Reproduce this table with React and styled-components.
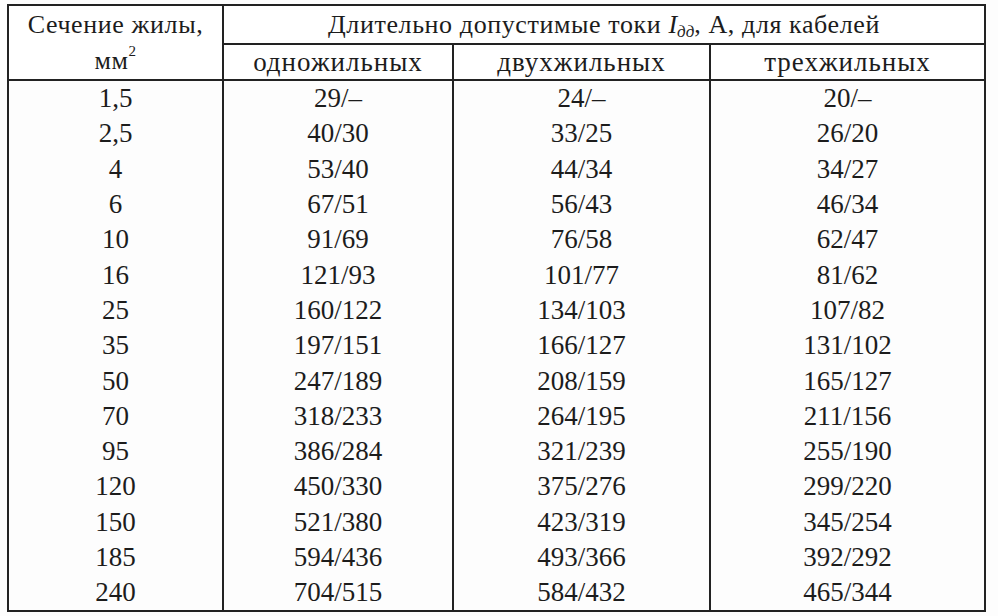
import React from 'react';
import styled, { createGlobalStyle } from 'styled-components';

const GlobalStyle = createGlobalStyle`
  html, body {
    margin: 0;
    padding: 0;
    background: #fdfdfd;
  }
  body {
    font-family: "Liberation Serif", "Times New Roman", serif;
    color: #1c1c1c;
  }
`;

const Page = styled.div`
  width: 998px;
  height: 616px;
  padding: 4px 0 0 7px;
  box-sizing: border-box;
  overflow: hidden;
`;

const Table = styled.table`
  border-collapse: collapse;
  table-layout: fixed;
  width: 977px;
  border: 2px solid #222;
`;

const HeadCell = styled.th`
  border: 2px solid #222;
  font-weight: normal;
  font-size: ${(p) => (p.$sub ? '27px' : '26px')};
  letter-spacing: ${(p) => (p.$sub ? '1px' : '0.6px')};
  line-height: 1;
  padding: 0;
  height: ${(p) => (p.$sub ? '34px' : '37px')};
  text-align: center;
  vertical-align: middle;
  background: #fff;
`;

const SectionHead = styled(HeadCell)`
  vertical-align: top;
  line-height: 36px;
  padding-top: 1px;
`;

const Sup = styled.sup`
  font-size: 15px;
  vertical-align: 13px;
  line-height: 0;
`;

const Current = styled.i`
  letter-spacing: 0;
  sub {
    font-size: 17px;
    vertical-align: -4px;
    line-height: 0;
  }
`;

const Cell = styled.td`
  border-left: 2px solid #222;
  border-right: 2px solid #222;
  font-size: 27px;
  line-height: 1;
  height: 35.3px;
  padding: 0;
  text-align: center;
  vertical-align: middle;
`;

const rows = [
  ['1,5', '29/–', '24/–', '20/–'],
  ['2,5', '40/30', '33/25', '26/20'],
  ['4', '53/40', '44/34', '34/27'],
  ['6', '67/51', '56/43', '46/34'],
  ['10', '91/69', '76/58', '62/47'],
  ['16', '121/93', '101/77', '81/62'],
  ['25', '160/122', '134/103', '107/82'],
  ['35', '197/151', '166/127', '131/102'],
  ['50', '247/189', '208/159', '165/127'],
  ['70', '318/233', '264/195', '211/156'],
  ['95', '386/284', '321/239', '255/190'],
  ['120', '450/330', '375/276', '299/220'],
  ['150', '521/380', '423/319', '345/254'],
  ['185', '594/436', '493/366', '392/292'],
  ['240', '704/515', '584/432', '465/344'],
];

export default function App() {
  return (
    <Page>
      <GlobalStyle />
      <Table>
        <colgroup>
          <col style={{ width: 215 }} />
          <col style={{ width: 230 }} />
          <col style={{ width: 257 }} />
          <col style={{ width: 275 }} />
        </colgroup>
        <thead>
          <tr>
            <SectionHead rowSpan={2}>
              Сечение жилы,
              <br />
              мм<Sup>2</Sup>
            </SectionHead>
            <HeadCell colSpan={3}>
              Длительно допустимые токи{' '}
              <Current>
                I<sub>дд</sub>
              </Current>
              , А, для кабелей
            </HeadCell>
          </tr>
          <tr>
            <HeadCell $sub>одножильных</HeadCell>
            <HeadCell $sub>двухжильных</HeadCell>
            <HeadCell $sub>трехжильных</HeadCell>
          </tr>
        </thead>
        <tbody>
          {rows.map((r) => (
            <tr key={r[0]}>
              {r.map((v, i) => (
                <Cell key={i}>{v}</Cell>
              ))}
            </tr>
          ))}
        </tbody>
      </Table>
    </Page>
  );
}
